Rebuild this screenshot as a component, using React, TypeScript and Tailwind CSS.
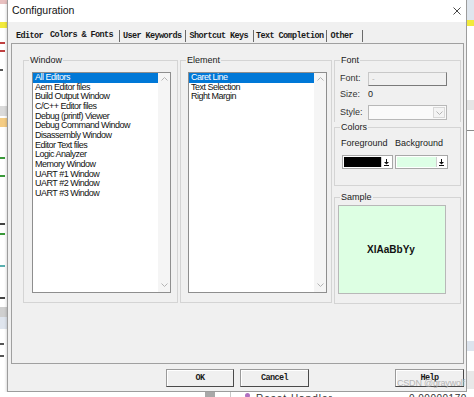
import React from "react";

const windowItems = [
  "All Editors",
  "Aem Editor files",
  "Build Output Window",
  "C/C++ Editor files",
  "Debug (printf) Viewer",
  "Debug Command Window",
  "Disassembly Window",
  "Editor Text files",
  "Logic Analyzer",
  "Memory Window",
  "UART #1 Window",
  "UART #2 Window",
  "UART #3 Window",
];

const elementItems = ["Caret Line", "Text Selection", "Right Margin"];

function Chevron({ down }: { down?: boolean }) {
  return (
    <svg width="7" height="4" viewBox="0 0 7 4">
      <polyline
        points={down ? "0.5,0.5 3.5,3.5 6.5,0.5" : "0.5,3.5 3.5,0.5 6.5,3.5"}
        fill="none"
        stroke="#b4b4b4"
        strokeWidth="1"
      />
    </svg>
  );
}

function DropArrow() {
  return (
    <svg width="5" height="7" viewBox="0 0 5 7">
      <path d="M2.5 0V4" stroke="#111" strokeWidth="1" />
      <path d="M0 3H5L2.5 5.5Z" fill="#111" />
      <path d="M0 6.5H5" stroke="#111" strokeWidth="1" />
    </svg>
  );
}

function ListBox({ items }: { items: string[] }) {
  return (
    <div className="flex h-[221px] border border-[#8e8e8e] bg-white">
      <div className="flex-1">
        {items.map((item, i) => (
          <div
            key={item}
            className={
              i === 0
                ? "h-[9.67px] whitespace-nowrap bg-[#0078d7] pl-[2px] text-[9px] leading-[9.67px] tracking-[-0.5px] text-white"
                : "h-[9.67px] whitespace-nowrap pl-[2px] text-[9px] leading-[9.67px] tracking-[-0.5px] text-[#111]"
            }
          >
            {item}
          </div>
        ))}
      </div>
      <div className="flex w-[12px] flex-col items-center justify-between bg-[#f5f5f5] pb-[5px] pt-[4px]">
        <Chevron />
        <Chevron down />
      </div>
    </div>
  );
}

function Legend({ children }: { children: React.ReactNode }) {
  return (
    <legend className="ml-[5px] px-[1px] text-[9px] leading-[10px] text-[#1a1a1a]">
      {children}
    </legend>
  );
}

function Tabs() {
  const sep = <div className="h-[12px] w-px bg-[#6a6a6a]" />;
  return (
    <div className="flex h-[21px] items-end pb-[1px] font-['Liberation_Mono',monospace] text-[8.5px] font-bold leading-[12px] tracking-[-0.6px] text-[#1a1a1a]">
      <span className="ml-[8px]">Editor</span>
      <span className="mb-[1px] ml-[7px]">Colors &amp; Fonts</span>
      <div className="ml-[6px]">{sep}</div>
      <span className="ml-[3px]">User Keywords</span>
      <div className="ml-[3px]">{sep}</div>
      <span className="ml-[4px]">Shortcut Keys</span>
      <div className="ml-[5px]">{sep}</div>
      <span className="ml-[2px]">Text Completion</span>
      <div className="ml-[2px]">{sep}</div>
      <span className="ml-[4px]">Other</span>
      <div className="ml-[9px]">{sep}</div>
    </div>
  );
}

function Btn({ label, className }: { label: string; className: string }) {
  return (
    <div
      className={`flex h-[18px] items-center justify-center border border-[#9a9a9a] border-b-[#4a4a4a] border-r-[#4a4a4a] bg-[#f0f0f0] font-['Liberation_Mono',monospace] text-[8.5px] font-bold tracking-[-0.6px] text-[#1a1a1a] shadow-[inset_1px_1px_0_#ffffff] ${className}`}
    >
      {label}
    </div>
  );
}

function RightColumn() {
  return (
    <div className="flex w-[127px] flex-col">
      <fieldset className="border border-b-0 border-[#d4d4d4] pb-[2px]">
        <Legend>Font</Legend>
        <div className="mt-[7px] flex h-[14px] items-center pl-[5px]">
          <span className="w-[28px] text-[9px] text-[#333]">Font:</span>
          <div className="flex h-[14px] w-[79px] items-center border border-[#c8c8c8] border-b-[#7a7a7a] border-r-[#7a7a7a] bg-[#f0f0f0] pl-[3px] text-[8px] text-[#b0b0b0]">
            -
          </div>
        </div>
        <div className="mt-[3px] flex h-[12px] items-center pl-[5px]">
          <span className="w-[28px] text-[9px] text-[#333]">Size:</span>
          <span className="text-[9px] text-[#222]">0</span>
        </div>
        <div className="mt-[4px] flex h-[15px] items-center pl-[5px]">
          <span className="w-[28px] text-[9px] text-[#333]">Style:</span>
          <div className="flex h-[15px] w-[79px] items-center justify-end border border-[#b8b8b8] bg-[#fafafa] pr-[1px]">
            <div className="flex h-[11px] w-[12px] items-center justify-center border border-[#d8d8d8] bg-[#f4f4f4]">
              <Chevron down />
            </div>
          </div>
        </div>
      </fieldset>
      <fieldset className="h-[64px] border border-[#d4d4d4]">
        <Legend>Colors</Legend>
        <div className="mt-[6px] flex h-[11px] items-center pl-[6px] text-[9px] text-[#222]">
          <span className="w-[54px]">Foreground</span>
          <span>Background</span>
        </div>
        <div className="mt-[6px] flex h-[14px] pl-[7px]">
          <div className="flex w-[51px] border border-[#a8a8a8] bg-white p-[1px]">
            <div className="flex-1 bg-black" />
            <div className="flex w-[10px] items-center justify-center border-l border-[#d0d0d0]">
              <DropArrow />
            </div>
          </div>
          <div className="ml-[2px] flex w-[53px] border border-[#a8a8a8] bg-white p-[1px]">
            <div className="flex-1 bg-[#ddffe6]" />
            <div className="flex w-[10px] items-center justify-center border-l border-[#d0d0d0]">
              <DropArrow />
            </div>
          </div>
        </div>
      </fieldset>
      <fieldset className="mt-[6px] h-[112px] border border-[#d4d4d4]">
        <Legend>Sample</Legend>
        <div className="ml-[3px] mt-[3px] flex h-[89px] w-[108px] items-center justify-center border border-[#b8b8b8] bg-[#ddffe3] pr-[2px] text-[10px] font-bold text-[#111]">
          XlAaBbYy
        </div>
      </fieldset>
    </div>
  );
}

function LeftStrip() {
  return (
    <div className="flex w-[7px] flex-col bg-white">
      <div className="h-[4px] bg-[#e8c0c0]" />
      <div className="h-[18px]" />
      <div className="h-[6px] bg-[#f2ea3c]" />
      <div className="h-[14px]" />
      <div className="h-[2px] w-[5px] bg-[#c04040]" />
      <div className="h-[6px]" />
      <div className="h-[2px] w-[5px] bg-[#c04040]" />
      <div className="h-[17px]" />
      <div className="h-[2px] w-[3px] bg-[#555]" />
      <div className="h-[35px]" />
      <div className="h-[10px] bg-[#dadada]" />
      <div className="h-[2px]" />
      <div className="h-[9px] bg-[#f4cc84]" />
      <div className="h-[30px]" />
      <div className="h-[2px] w-[5px] bg-[#3a9a3a]" />
      <div className="h-[16px]" />
      <div className="h-[2px] w-[5px] bg-[#3a9a3a]" />
      <div className="h-[46px]" />
      <div className="h-[2px] w-[5px] bg-[#444]" />
      <div className="h-[8px]" />
      <div className="h-[2px] w-[5px] bg-[#3a9a3a]" />
      <div className="h-[30px]" />
      <div className="h-[2px] w-[5px] bg-[#5ab0b0]" />
      <div className="h-[30px]" />
      <div className="h-[2px] w-[5px] bg-[#444]" />
      <div className="h-[8px]" />
      <div className="h-[10px] bg-[#cfcfcf]" />
      <div className="h-[12px] bg-[#dfe5ee]" />
      <div className="h-[14px]" />
      <div className="h-[2px] w-[4px] bg-[#555]" />
      <div className="h-[10px]" />
      <div className="h-[2px] w-[4px] bg-[#555]" />
    </div>
  );
}

function RightStrip() {
  return (
    <div className="flex w-[7px] flex-col bg-white">
      <div className="h-[20px] bg-[#dfe6ee]" />
      <div className="h-[6px] bg-[#f2ea3c]" />
      <div className="h-[74px]" />
      <div className="h-[10px] bg-[#e6e6e6]" />
      <div className="h-[20px]" />
      <div className="h-[1px] bg-[#8a8a8a]" />
      <div className="h-[210px]" />
      <div className="h-[10px] bg-[#dde4ee]" />
      <div className="h-[20px]" />
      <div className="h-[18px] bg-[#e8e8e8]" />
    </div>
  );
}

export default function App() {
  return (
    <div className="relative flex h-[397px] w-[474px] flex-col overflow-hidden bg-white font-['Liberation_Sans',Arial,sans-serif]">
      <div className="flex h-[392px]">
        <LeftStrip />
        <div className="flex w-[460px] flex-col border-x border-b border-[#9c9c9c] bg-[#f0f0f0] shadow-[0_1px_3px_rgba(0,0,0,0.25)]">
          <div className="flex h-[22px] items-center justify-between bg-white pl-[4px] pr-[5px]">
            <span className="text-[10.5px] text-[#111]">Configuration</span>
            <svg width="8" height="8" viewBox="0 0 8 8">
              <path d="M0.5 0.5L7.5 7.5M7.5 0.5L0.5 7.5" stroke="#333" strokeWidth="0.9" />
            </svg>
          </div>
          <Tabs />
          <div className="ml-[3px] mr-[2px] flex h-[321px] gap-[2px] border border-[#a0a0a0] pl-[11px] pt-[11px]">
            <fieldset className="h-[248px] w-[155px] border border-[#d4d4d4]">
              <Legend>Window</Legend>
              <div className="mt-[7px] pl-[8px] pr-[6px]">
                <ListBox items={windowItems} />
              </div>
            </fieldset>
            <fieldset className="h-[248px] w-[152px] border border-[#d4d4d4]">
              <Legend>Element</Legend>
              <div className="mt-[7px] pl-[7px] pr-[4px]">
                <ListBox items={elementItems} />
              </div>
            </fieldset>
            <RightColumn />
          </div>
          <div className="mt-[5px] flex">
            <Btn label="OK" className="ml-[158px] w-[68px]" />
            <Btn label="Cancel" className="ml-[6px] w-[69px]" />
            <Btn label="Help" className="ml-[86px] w-[69px]" />
          </div>
        </div>
        <RightStrip />
      </div>
      <div className="flex h-[5px] items-start overflow-hidden bg-white text-[10px] leading-[14px] text-[#333]">
        <div className="ml-[205px] h-[5px] w-[10px] bg-[#a8a8a8]" />
        <div className="ml-[15px] h-[5px] w-px bg-[#c8c8c8]" />
        <div className="ml-[14px] mt-[1px] h-[5px] w-[5px] rounded-full bg-[#b070c0]" />
        <span className="ml-[6px] tracking-[1px]">Reset Handler</span>
        <span className="ml-[76px] tracking-[0.5px]">0.00000170</span>
      </div>
      <span className="absolute left-[397px] top-[377px] text-[9px] tracking-[-0.2px] text-[#b4b4b4]">
        CSDN @graywolf
      </span>
    </div>
  );
}
